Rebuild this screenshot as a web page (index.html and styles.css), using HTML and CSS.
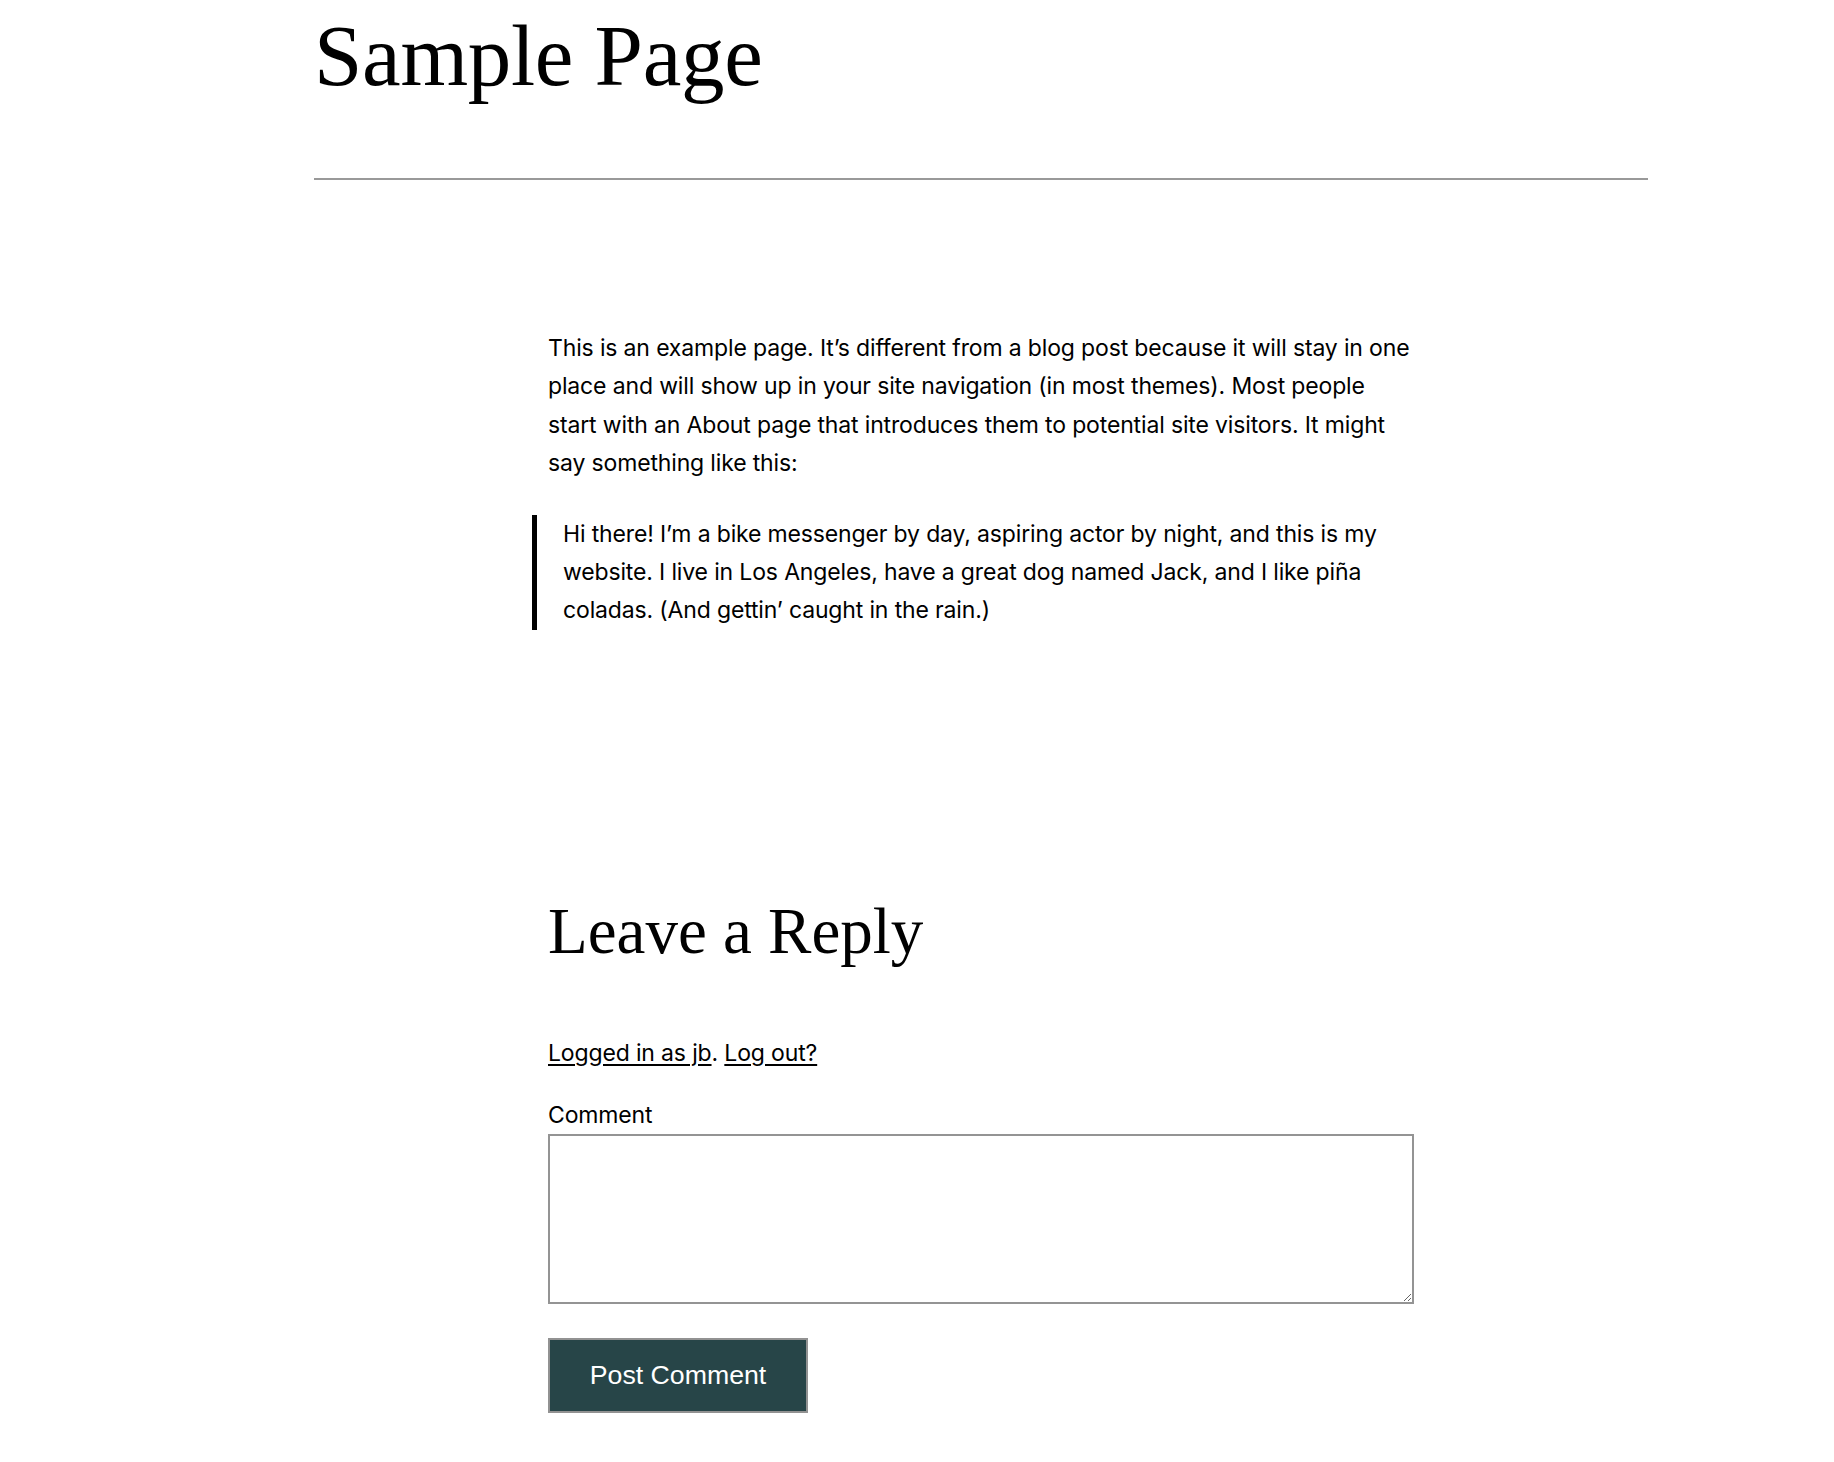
FILE: index.html
```html
<!DOCTYPE html>
<html lang="en">
<head>
<meta charset="utf-8">
<title>Sample Page</title>
<link rel="stylesheet" href="styles.css">
</head>
<body>
<div class="page">
  <header class="wide">
    <h1 class="post-title">Sample Page</h1>
    <hr class="sep">
  </header>
  <main class="content">
    <p class="intro">This is an example page. It’s different from a blog post because it will stay in one place and will show up in your site navigation (in most themes). Most people start with an About page that introduces them to potential site visitors. It might say something like this:</p>
    <blockquote class="quote"><p>Hi there! I’m a bike messenger by day, aspiring actor by night, and this is my website. I live in Los Angeles, have a great dog named Jack, and I like piña coladas. (And gettin’ caught in the rain.)</p></blockquote>
    <section class="respond">
      <h2 class="reply-title">Leave a Reply</h2>
      <p class="logged-in"><a href="#">Logged in as jb</a>. <a href="#">Log out?</a></p>
      <label class="comment-label" for="comment">Comment</label>
      <textarea id="comment" class="comment-box"></textarea>
      <button class="submit" type="button">Post Comment</button>
    </section>
  </main>
</div>
</body>
</html>
```
FILE: styles.css
```css
html, body {
  margin: 0;
  padding: 0;
  background: #fff;
}
body {
  font-family: Inter, "Noto Sans", sans-serif;
  color: #000;
}
.page {
  padding-left: 128px;
  padding-bottom: 40px;
}
.wide {
  width: 1334px;
  margin: 0 auto;
}
.post-title {
  font-family: "Liberation Serif", serif;
  font-weight: 400;
  font-size: 87px;
  line-height: 96px;
  margin: 8px 0 0 0;
  letter-spacing: -0.3px;
}
.sep {
  border: 0;
  height: 2px;
  background: #999;
  margin: 74px 0 0 0;
}
.content {
  width: 866px;
  margin: 0 auto;
}
.intro,
.quote p,
.logged-in,
.comment-label {
  font-size: 23px;
  letter-spacing: -0.15px;
}
.intro {
  line-height: 38.4px;
  margin: 149px 0 0 0;
}
.quote {
  margin: 32px 0 0 -16px;
  border-left: 5px solid #000;
  padding-left: 26px;
}
.quote p {
  line-height: 38.4px;
  margin: 0;
}
.respond {
  display: flex;
  flex-direction: column;
  align-items: flex-start;
}
.reply-title {
  font-family: "Liberation Serif", serif;
  font-weight: 400;
  font-size: 65px;
  line-height: 78px;
  margin: 262px 0 0 0;
}
.logged-in {
  line-height: 38.4px;
  margin: 64px 0 0 0;
}
.logged-in a {
  color: #000;
  text-decoration: underline;
  text-underline-offset: 3px;
}
.comment-label {
  line-height: 32px;
  margin-top: 27px;
}
.comment-box {
  box-sizing: border-box;
  width: 866px;
  height: 170px;
  margin-top: 3px;
  border: 2px solid #949494;
  border-radius: 0;
  background: #fff;
  font-family: Inter, sans-serif;
  font-size: 21px;
  padding: 8px;
}
.submit {
  box-sizing: border-box;
  width: 260px;
  height: 75px;
  margin-top: 34px;
  background: #274548;
  color: #fff;
  border: 2px solid #929292;
  border-radius: 0;
  font-family: "Liberation Sans", Arial, sans-serif;
  font-size: 26.7px;
  padding: 0;
}
```
